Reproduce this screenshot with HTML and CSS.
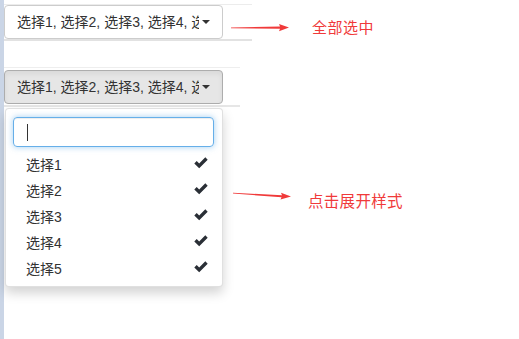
FILE: index.html
```html
<!DOCTYPE html>
<html>
<head>
<meta charset="utf-8">
<link rel="stylesheet" href="styles.css">
</head>
<body>
<div class="page">
  <div class="strip"></div>
  <div class="main">
    <div class="rule rule-top"></div>
    <div class="btn">
      <span class="btn-text">选择1, 选择2, 选择3, 选择4, 选择5</span>
      <span class="caret"></span>
    </div>
    <div class="rule rule-bottom"></div>

    <div class="rule rule-top2"></div>
    <div class="btn btn-active">
      <span class="btn-text">选择1, 选择2, 选择3, 选择4, 选择5</span>
      <span class="caret"></span>
    </div>
    <div class="rule rule-bottom2"></div>

    <div class="menu">
      <div class="search"><span class="cursor"></span></div>
      <ul class="items">
        <li class="item"><span>选择1</span><svg class="check" viewBox="0 0 14 12"><path d="M0.3 6.4 L2.7 4 L5.2 6.4 L11.3 0.3 L13.7 2.7 L5.2 11.2 Z"/></svg></li>
        <li class="item"><span>选择2</span><svg class="check" viewBox="0 0 14 12"><path d="M0.3 6.4 L2.7 4 L5.2 6.4 L11.3 0.3 L13.7 2.7 L5.2 11.2 Z"/></svg></li>
        <li class="item"><span>选择3</span><svg class="check" viewBox="0 0 14 12"><path d="M0.3 6.4 L2.7 4 L5.2 6.4 L11.3 0.3 L13.7 2.7 L5.2 11.2 Z"/></svg></li>
        <li class="item"><span>选择4</span><svg class="check" viewBox="0 0 14 12"><path d="M0.3 6.4 L2.7 4 L5.2 6.4 L11.3 0.3 L13.7 2.7 L5.2 11.2 Z"/></svg></li>
        <li class="item"><span>选择5</span><svg class="check" viewBox="0 0 14 12"><path d="M0.3 6.4 L2.7 4 L5.2 6.4 L11.3 0.3 L13.7 2.7 L5.2 11.2 Z"/></svg></li>
      </ul>
    </div>
  </div>

  <svg class="arrow arrow1" viewBox="0 0 60 10" width="60" height="10"><polygon points="0,4.6 49,3.4 48,1 58,4.6 48,8.2 49,5.8 0,5.2"/></svg>
  <div class="note note1">全部选中</div>

  <svg class="arrow arrow2" viewBox="0 0 60 10" width="60" height="10"><polygon points="0,1.8 49,4.2 48,1.8 58,5.6 47.5,8.6 48.5,6.3 0,2.6"/></svg>
  <div class="note note2">点击展开样式</div>
</div>
</body>
</html>
```

FILE: styles.css
```css
* { box-sizing: border-box; }
html, body { margin: 0; padding: 0; background: #fff; }
body {
  font-family: "Liberation Sans", "Noto Sans CJK SC", sans-serif;
  color: #333;
}
.page {
  position: relative;
  width: 519px;
  height: 339px;
  display: flex;
  overflow: hidden;
}
.strip {
  width: 4px;
  height: 339px;
  background: #cad5e6;
  flex: none;
}
.main {
  display: flex;
  flex-direction: column;
  padding-top: 4px;
}
.rule { height: 1px; background: #ececec; }
.rule-top { width: 248px; }
.rule-bottom { width: 248px; height: 2px; background: #e2e2e2; }
.rule-top2 { width: 236px; margin-top: 26px; background: #eeeeee; }
.rule-bottom2 { width: 236px; height: 2px; background: #e6e6e6; margin-top: 1px; }

.btn {
  width: 219px;
  height: 34px;
  border: 1px solid #cccccc;
  border-radius: 4px;
  background: #fff;
  display: flex;
  align-items: center;
  padding: 0 12px 0 12px;
  font-size: 14px;
  line-height: 20px;
  color: #333;
}
.btn-active {
  margin-top: 2px;
  background: #e6e6e6;
  border-color: #adadad;
  box-shadow: inset 0 3px 5px rgba(0,0,0,0.06);
}
.btn-text {
  flex: 1;
  white-space: nowrap;
  overflow: hidden;
}
.caret {
  flex: none;
  width: 0;
  height: 0;
  margin-left: 3px;
  border-top: 4px solid #333;
  border-left: 4px solid transparent;
  border-right: 4px solid transparent;
}

.menu {
  margin-left: 1px;
  margin-top: 1px;
  width: 218px;
  height: 179px;
  background: #fff;
  border: 1px solid rgba(0,0,0,0.12);
  border-radius: 4px;
  box-shadow: 0 6px 12px rgba(0,0,0,0.175);
  padding: 8px 8px 5px 7px;
}
.search {
  width: 201px;
  height: 30px;
  border: 1px solid #66afe9;
  border-radius: 4px;
  box-shadow: inset 0 1px 1px rgba(0,0,0,0.075), 0 0 6px rgba(102,175,233,0.6);
  display: flex;
  align-items: center;
  padding-left: 13px;
}
.cursor {
  width: 1px;
  height: 17px;
  background: #333;
}
.items {
  list-style: none;
  margin: 4px 0 0 0;
  padding: 0;
}
.item {
  height: 26px;
  display: flex;
  align-items: center;
  justify-content: space-between;
  padding: 0 6px 0 13px;
  font-size: 14px;
  color: #333;
}
.check {
  width: 14px;
  height: 12px;
  fill: #2a2f36;
  margin-top: -2px;
}

.arrow { position: absolute; fill: #f03a3a; }
.arrow1 { left: 231px; top: 23px; }
.arrow2 { left: 233px; top: 191px; }
.note {
  position: absolute;
  color: #f03a3a;
  font-family: "Noto Sans CJK SC", sans-serif;
  font-size: 15px;
  line-height: 20px;
  letter-spacing: 0.5px;
}
.note1 { left: 312px; top: 17px; }
.note2 { left: 308px; top: 190px; font-size: 15.5px; letter-spacing: 0.3px; }
```
